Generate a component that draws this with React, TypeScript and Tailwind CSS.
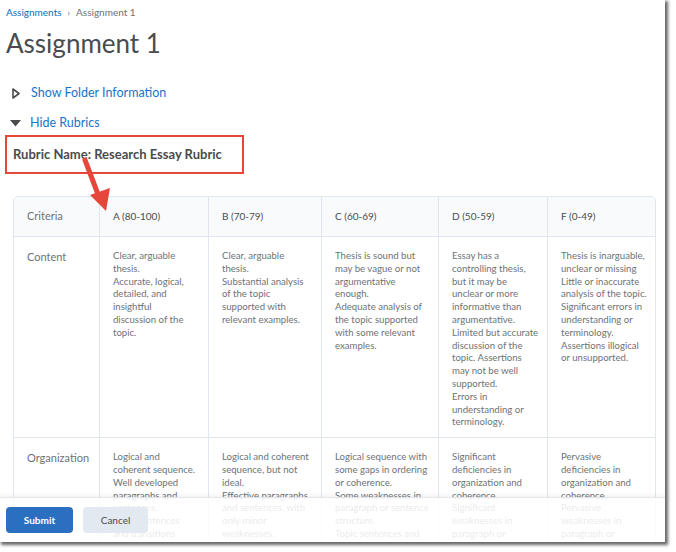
import React from "react";

const levels = ["A (80-100)", "B (70-79)", "C (60-69)", "D (50-59)", "F (0-49)"];

// per-column right padding, tuned so the lines break as in the screenshot
const padRight = ["pr-[12px]", "pr-[8px]", "pr-[8px]", "pr-[8px]", "pr-[8px]"];

const rows = [
  {
    name: "Content",
    cells: [
      ["Clear, arguable thesis.", "Accurate, logical, detailed, and insightful discussion of the topic."],
      ["Clear, arguable thesis.", "Substantial analysis of the topic supported with relevant examples."],
      ["Thesis is sound but may be vague or not argumentative enough.", "Adequate analysis of the topic supported with some relevant examples."],
      [
        "Essay has a controlling thesis, but it may be unclear or more informative than argumentative.",
        "Limited but accurate discussion of the topic. Assertions may not be well supported.",
        "Errors in understanding or terminology.",
      ],
      [
        "Thesis is inarguable, unclear or missing",
        "Little or inaccurate analysis of the topic.",
        "Significant errors in understanding or terminology.",
        "Assertions illogical or unsupported.",
      ],
    ],
  },
  {
    name: "Organization",
    cells: [
      ["Logical and coherent sequence.", "Well developed paragraphs and sentences.", "Topic sentences and transitions reinforce flow of ideas."],
      ["Logical and coherent sequence, but not ideal.", "Effective paragraphs and sentences, with only minor weaknesses.", "Topic sentences and transitions mostly effective."],
      ["Logical sequence with some gaps in ordering or coherence.", "Some weaknesses in paragraph or sentence structure.", "Topic sentences and transitions sometimes ineffective."],
      ["Significant deficiencies in organization and coherence.", "Significant weaknesses in paragraph or sentence structure."],
      ["Pervasive deficiencies in organization and coherence.", "Pervasive weaknesses in paragraph or sentence structure."],
    ],
  },
];

function Arrow() {
  return (
    <svg className="absolute left-0 top-0 pointer-events-none" width="140" height="220" viewBox="0 0 140 220">
      <line x1="85" y1="160" x2="99" y2="197" stroke="#e5473b" strokeWidth="5" strokeLinecap="round" />
      <polygon points="90,195 110,188 106,211" fill="#e5473b" />
    </svg>
  );
}

export default function App() {
  return (
    <div className="w-[676px] h-[552px] bg-white font-['Lato',_'Noto_Sans',_sans-serif]">
      <div className="relative w-[665px] h-[542px] overflow-hidden bg-white shadow-[2px_2px_3px_1px_rgba(0,0,0,0.6)]">
        <div className="px-[6px] pt-[6px]">
          {/* breadcrumb */}
          <div className="flex items-center gap-[6px] text-[10px] leading-[13px]">
            <span className="text-[#0a6fc2]">Assignments</span>
            <span className="text-[#6e7376] text-[9px]">›</span>
            <span className="text-[#6e7376]">Assignment 1</span>
          </div>
          <h1 className="mt-[7px] text-[26px] leading-[34px] text-[#494c4e]">Assignment 1</h1>

          {/* toggles */}
          <div className="mt-[24px] flex items-center gap-[11px] pl-[6px]">
            <svg width="8" height="11" viewBox="0 0 8 11">
              <polygon points="1,1 7,5.5 1,10" fill="none" stroke="#494c4e" strokeWidth="1.6" strokeLinejoin="round" />
            </svg>
            <span className="text-[12.5px] leading-[18px] text-[#1a73c8]">Show Folder Information</span>
          </div>
          <div className="mt-[12px] flex items-center gap-[9px] pl-[4px]">
            <svg width="11" height="7" viewBox="0 0 11 7">
              <polygon points="0,0 11,0 5.5,6.5" fill="#494c4e" />
            </svg>
            <span className="text-[12.5px] leading-[18px] text-[#1a73c8]">Hide Rubrics</span>
          </div>

          <div className="mt-[3px] -ml-[1px] w-[239px] h-[39px] border-2 border-[#e5473b] flex items-center pl-[6px]">
            <span className="text-[13px] font-bold text-[#494c4e]">Rubric Name: Research Essay Rubric</span>
          </div>
        </div>

        {/* rubric table */}
        <div className="ml-[13px] mt-[22px] w-[643px] rounded-[5px] border border-[#dfe6ef]">
          <div className="grid grid-cols-[85px_109px_113px_117px_109px_110px] bg-[#f9fafc] rounded-t-[5px] h-[39px] items-stretch">
            <div className="flex items-center pl-[13px] text-[11px] text-[#6e7376]">Criteria</div>
            {levels.map((l) => (
              <div key={l} className="flex items-center border-l border-[#dfe6ef] pl-[13px] text-[10px] text-[#494c4e]">
                {l}
              </div>
            ))}
          </div>
          {rows.map((r) => (
            <div key={r.name} className="grid grid-cols-[85px_109px_113px_117px_109px_110px] border-t border-[#dfe6ef]">
              <div className="pl-[13px] pt-[13px] text-[11px] leading-[14px] text-[#6e7376]">{r.name}</div>
              {r.cells.map((c, i) => (
                <div key={i} className={`border-l border-[#dfe6ef] pl-[13px] ${padRight[i]} pt-[13px] pb-[8px] text-[9.6px] leading-[12.8px] text-[#6e7376]`}>
                  {c.map((p, j) => (
                    <div key={j}>{p}</div>
                  ))}
                </div>
              ))}
            </div>
          ))}
        </div>

        <Arrow />

        {/* sticky footer */}
        <div className="absolute left-0 right-0 bottom-0 h-[45px] bg-white/85 border-t border-[#e3e6ea] shadow-[0_-2px_4px_rgba(0,0,0,0.05)] flex items-center gap-[10px] px-[6px]">
          <button className="w-[67px] h-[26px] rounded-[4px] bg-[#2a6fc0] text-white text-[10px] font-bold">Submit</button>
          <button className="w-[65px] h-[26px] rounded-[4px] bg-[#e3e9f1] text-[#494c4e] text-[10px]">Cancel</button>
        </div>
      </div>
    </div>
  );
}
